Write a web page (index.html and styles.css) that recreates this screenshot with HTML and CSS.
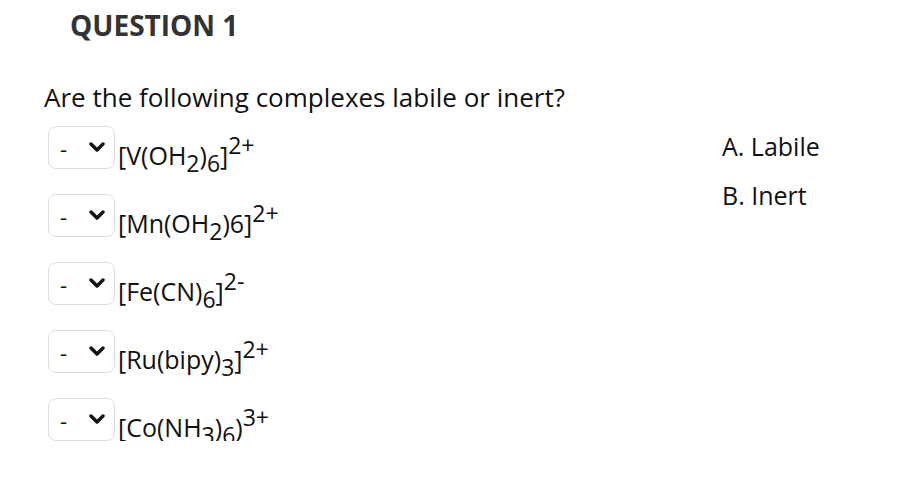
FILE: index.html
```html
<!DOCTYPE html>
<html lang="en">
<head>
    <meta charset="UTF-8">
    <meta name="viewport" content="width=device-width, initial-scale=1.0">
    <title>Question 1</title>
    <link rel="stylesheet" href="styles.css">
</head>
<body>
    <div class="question">
        <h2 class="title">QUESTION 1</h2>
        <p class="prompt">Are the following complexes labile or inert?</p>
        <div class="matching">
            <div class="matches">
                <div class="row">
                    <span class="pick">
                        <select><option>-</option><option>A</option><option>B</option></select>
                        <svg class="chev" viewBox="0 0 16 10"><polyline points="2,2 8,8 14,2"/></svg>
                    </span>
                    <span class="formula">[V(OH<sub>2</sub>)<sub>6</sub>]<sup>2+</sup></span>
                </div>
                <div class="row">
                    <span class="pick">
                        <select><option>-</option><option>A</option><option>B</option></select>
                        <svg class="chev" viewBox="0 0 16 10"><polyline points="2,2 8,8 14,2"/></svg>
                    </span>
                    <span class="formula">[Mn(OH<sub>2</sub>)6]<sup>2+</sup></span>
                </div>
                <div class="row">
                    <span class="pick">
                        <select><option>-</option><option>A</option><option>B</option></select>
                        <svg class="chev" viewBox="0 0 16 10"><polyline points="2,2 8,8 14,2"/></svg>
                    </span>
                    <span class="formula">[Fe(CN)<sub>6</sub>]<sup>2-</sup></span>
                </div>
                <div class="row">
                    <span class="pick">
                        <select><option>-</option><option>A</option><option>B</option></select>
                        <svg class="chev" viewBox="0 0 16 10"><polyline points="2,2 8,8 14,2"/></svg>
                    </span>
                    <span class="formula">[Ru(bipy)<sub>3</sub>]<sup>2+</sup></span>
                </div>
                <div class="row">
                    <span class="pick">
                        <select><option>-</option><option>A</option><option>B</option></select>
                        <svg class="chev" viewBox="0 0 16 10"><polyline points="2,2 8,8 14,2"/></svg>
                    </span>
                    <span class="formula">[Co(NH<sub>3</sub>)<sub>6</sub>)<sup>3+</sup></span>
                </div>
            </div>
            <ul class="choices">
                <li>A. Labile</li>
                <li>B. Inert</li>
            </ul>
        </div>
    </div>
</body>
</html>
```

FILE: styles.css
```css
body {
    margin: 0;
    font-family: "Open Sans", "Noto Sans", sans-serif;
    color: #111;
    background: #fff;
}
.question {
    padding: 6px 0 0 44px;
}
.title {
    margin: 0 0 0 26px;
    font-size: 28px;
    font-weight: 700;
    color: #333;
    line-height: 38px;
}
.prompt {
    margin: 35px 0 0;
    font-size: 26px;
    line-height: 36px;
}
.matching {
    display: grid;
    grid-template-columns: 674px auto;
    padding-left: 4px;
    margin-top: 11px;
}
.matches {
    display: flex;
    flex-direction: column;
    gap: 25px;
}
.row {
    display: flex;
    align-items: center;
    height: 43px;
}
.pick {
    position: relative;
    display: inline-block;
}
select {
    appearance: none;
    -webkit-appearance: none;
    width: 67px;
    height: 43px;
    padding: 0 0 0 11px;
    border: 1px solid #ddd;
    border-radius: 8px;
    background: #fff;
    font-family: inherit;
    font-size: 22px;
    color: #111;
}
.chev {
    position: absolute;
    left: 41px;
    top: 16px;
    width: 16px;
    height: 10px;
    pointer-events: none;
}
.chev polyline {
    fill: none;
    stroke: #111;
    stroke-width: 3.4;
    stroke-linecap: round;
    stroke-linejoin: round;
}
.formula {
    margin-left: 3px;
    padding-top: 14px;
    font-size: 25px;
    line-height: 28px;
}
.formula sub, .formula sup {
    font-size: 0.92em;
    line-height: 0;
}
.formula sub {
    vertical-align: -0.3em;
}
.formula sup {
    vertical-align: 0.5em;
}
.choices {
    list-style: none;
    margin: -4px 0 0;
    padding: 0;
    font-size: 25px;
    line-height: 49px;
}
```
